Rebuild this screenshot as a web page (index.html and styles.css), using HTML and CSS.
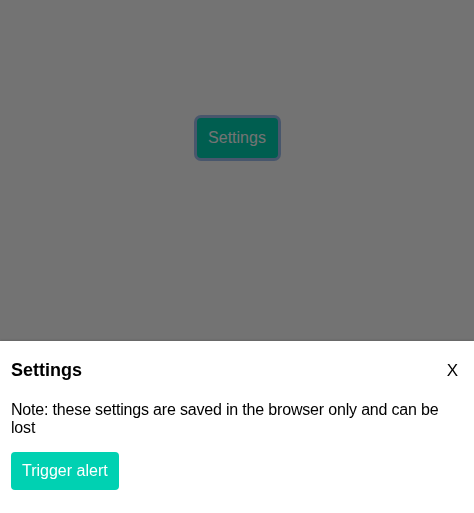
FILE: index.html
```html
<!DOCTYPE html>
<html lang="en">
<head>
<meta charset="utf-8">
<title>Settings</title>
<link rel="stylesheet" href="styles.css">
</head>
<body>
  <main class="page">
    <button class="btn btn-open" type="button">Settings</button>
  </main>
  <div class="overlay"></div>
  <section class="sheet">
    <header class="sheet-header">
      <h2 class="sheet-title">Settings</h2>
      <button class="sheet-close" type="button" aria-label="Close">X</button>
    </header>
    <p class="sheet-note">Note: these settings are saved in the browser only and can be lost</p>
    <button class="btn btn-alert" type="button">Trigger alert</button>
  </section>
</body>
</html>
```

FILE: styles.css
```css
html, body {
  margin: 0;
  padding: 0;
  height: 100%;
}
body {
  background: #ffffff;
  font-family: "Liberation Sans", Arial, sans-serif;
  color: #000;
  overflow: hidden;
}
.page {
  display: flex;
  justify-content: center;
  padding-top: 118px;
}
.btn {
  font-family: "Liberation Sans", Arial, sans-serif;
  font-size: 16px;
  color: #ffffff;
  background: #00d1b2;
  border: none;
  border-radius: 4px;
  cursor: pointer;
}
.btn-open {
  width: 81px;
  height: 40px;
  padding: 0;
  box-shadow: 0 0 0 3px #9fbff0;
}
.overlay {
  position: fixed;
  inset: 0;
  background: rgba(0, 0, 0, 0.55);
}
.sheet {
  position: fixed;
  left: 0;
  right: 0;
  bottom: 0;
  height: 172px;
  box-sizing: border-box;
  background: #ffffff;
  padding: 19px 11px 0 11px;
  box-shadow: 0 -1px 2px rgba(0, 0, 0, 0.12);
}
.sheet-header {
  display: flex;
  justify-content: space-between;
  align-items: center;
}
.sheet-title {
  margin: 0;
  font-size: 18px;
  font-weight: bold;
  line-height: 21px;
}
.sheet-close {
  background: none;
  border: none;
  padding: 0;
  margin-right: 5px;
  font-family: "Liberation Sans", Arial, sans-serif;
  font-size: 17px;
  line-height: 21px;
  color: #000;
  cursor: pointer;
}
.sheet-note {
  margin: 20px 0 0 0;
  font-size: 16px;
  line-height: 18px;
  letter-spacing: -0.18px;
  padding-right: 8px;
}
.btn-alert {
  margin-top: 15px;
  height: 38px;
  padding: 0 11px;
}
```
